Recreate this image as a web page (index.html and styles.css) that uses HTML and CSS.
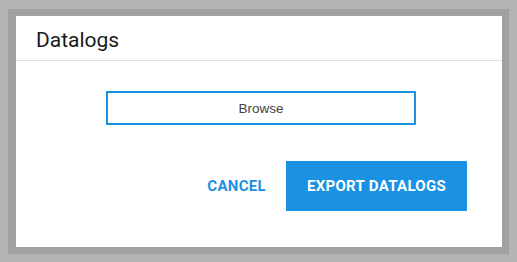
FILE: index.html
```html
<!DOCTYPE html>
<html lang="en">
<head>
    <meta charset="UTF-8">
    <meta name="viewport" content="width=device-width, initial-scale=1.0">
    <title>Datalogs</title>
    <link rel="stylesheet" href="styles.css">
</head>
<body>
    <div class="frame">
        <div class="dialog">
            <header class="dialog-title">Datalogs</header>
            <div class="dialog-body">
                <button class="browse-btn">Browse</button>
                <div class="actions">
                    <button class="cancel-btn">CANCEL</button>
                    <button class="export-btn">EXPORT DATALOGS</button>
                </div>
            </div>
        </div>
    </div>
</body>
</html>
```

FILE: styles.css
```css
body {
    margin: 0;
    padding: 9px 8px 8px 8px;
    background-color: #b3b3b3;
    font-family: Roboto, "Liberation Sans", sans-serif;
}

.frame {
    width: 501px;
    height: 245px;
    box-sizing: border-box;
    padding: 7px 7px 7px 8px;
    background-color: #a0a0a0;
}

.dialog {
    height: 231px;
    background-color: white;
}

.dialog-title {
    height: 45px;
    box-sizing: border-box;
    padding: 12px 0 0 20px;
    border-bottom: 1px solid #e0e0e0;
    font-size: 21px;
    color: #1a1a1a;
}

.dialog-body {
    display: flex;
    flex-direction: column;
}

.browse-btn {
    display: block;
    width: 310px;
    height: 34px;
    margin: 30px 0 0 90px;
    border: 2px solid #1b91e3;
    background: white;
    color: #444;
    font-family: "Liberation Sans", Arial, sans-serif;
    font-size: 13.5px;
}

.actions {
    display: flex;
    justify-content: flex-end;
    align-items: center;
    gap: 20px;
    margin-top: 36px;
    padding-right: 35px;
}

.cancel-btn {
    border: none;
    background: none;
    padding: 0;
    color: #1b91e3;
    font-family: inherit;
    font-size: 15px;
    font-weight: bold;
    letter-spacing: 0.3px;
}

.export-btn {
    width: 181px;
    height: 50px;
    border: none;
    background-color: #1b91e3;
    color: white;
    font-family: inherit;
    font-size: 15px;
    font-weight: bold;
    letter-spacing: 0.3px;
}
```
